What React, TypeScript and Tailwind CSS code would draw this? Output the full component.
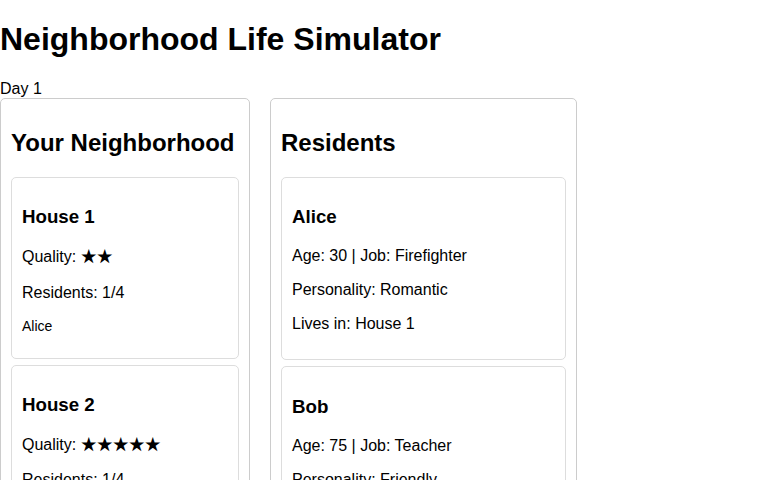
import React from 'react';

type House = { id: number; quality: number; capacity: number; residents: string[] };
type Resident = { name: string; age: number; job: string; personality: string; house: string };

const houses: House[] = [
  { id: 1, quality: 2, capacity: 4, residents: ['Alice'] },
  { id: 2, quality: 5, capacity: 4, residents: ['Bob'] },
];

const residents: Resident[] = [
  { name: 'Alice', age: 30, job: 'Firefighter', personality: 'Romantic', house: 'House 1' },
  { name: 'Bob', age: 75, job: 'Teacher', personality: 'Friendly', house: 'House 2' },
];

export default function App() {
  return (
    <div className="font-['Liberation_Sans',Arial,sans-serif] text-[16px] leading-[normal] text-black bg-white min-h-screen">
      <h1 className="text-[32px] leading-[normal] font-bold my-[21.44px]">Neighborhood Life Simulator</h1>
      <div>Day 1</div>

      <div className="flex items-start gap-5">
        <div className="w-[250px] shrink-0 border border-[#ccc] rounded-[5px] p-[10px]">
          <h2 className="text-[24px] leading-[normal] font-bold my-[19.92px]">Your Neighborhood</h2>
          {houses.map((house) => (
            <div key={house.id} className="border border-[#ddd] rounded-[5px] p-[10px] mb-[6px]">
              <h3 className="text-[18.72px] leading-[normal] font-bold my-[18.72px]">House {house.id}</h3>
              <p className="my-4 h-[20.4px]">
                Quality:{' '}
                <span className="font-['Noto_Sans_CJK_SC',sans-serif] leading-none">
                  {'★'.repeat(house.quality)}
                </span>
              </p>
              <p className="my-4">
                Residents: {house.residents.length}/{house.capacity}
              </p>
              {house.residents.map((name) => (
                <p key={name} className="text-[14px] leading-[normal] my-[14px]">
                  {name}
                </p>
              ))}
            </div>
          ))}
        </div>

        <div className="w-[307px] shrink-0 border border-[#ccc] rounded-[5px] p-[10px]">
          <h2 className="text-[24px] leading-[normal] font-bold my-[19.92px]">Residents</h2>
          {residents.map((r) => (
            <div key={r.name} className="border border-[#ddd] rounded-[5px] p-[10px] mb-[6px]">
              <h3 className="text-[18.72px] leading-[normal] font-bold my-[18.72px]">{r.name}</h3>
              <p className="my-4">
                Age: {r.age} | Job: {r.job}
              </p>
              <p className="my-4">Personality: {r.personality}</p>
              <p className="my-4">Lives in: {r.house}</p>
            </div>
          ))}
        </div>
      </div>
    </div>
  );
}
